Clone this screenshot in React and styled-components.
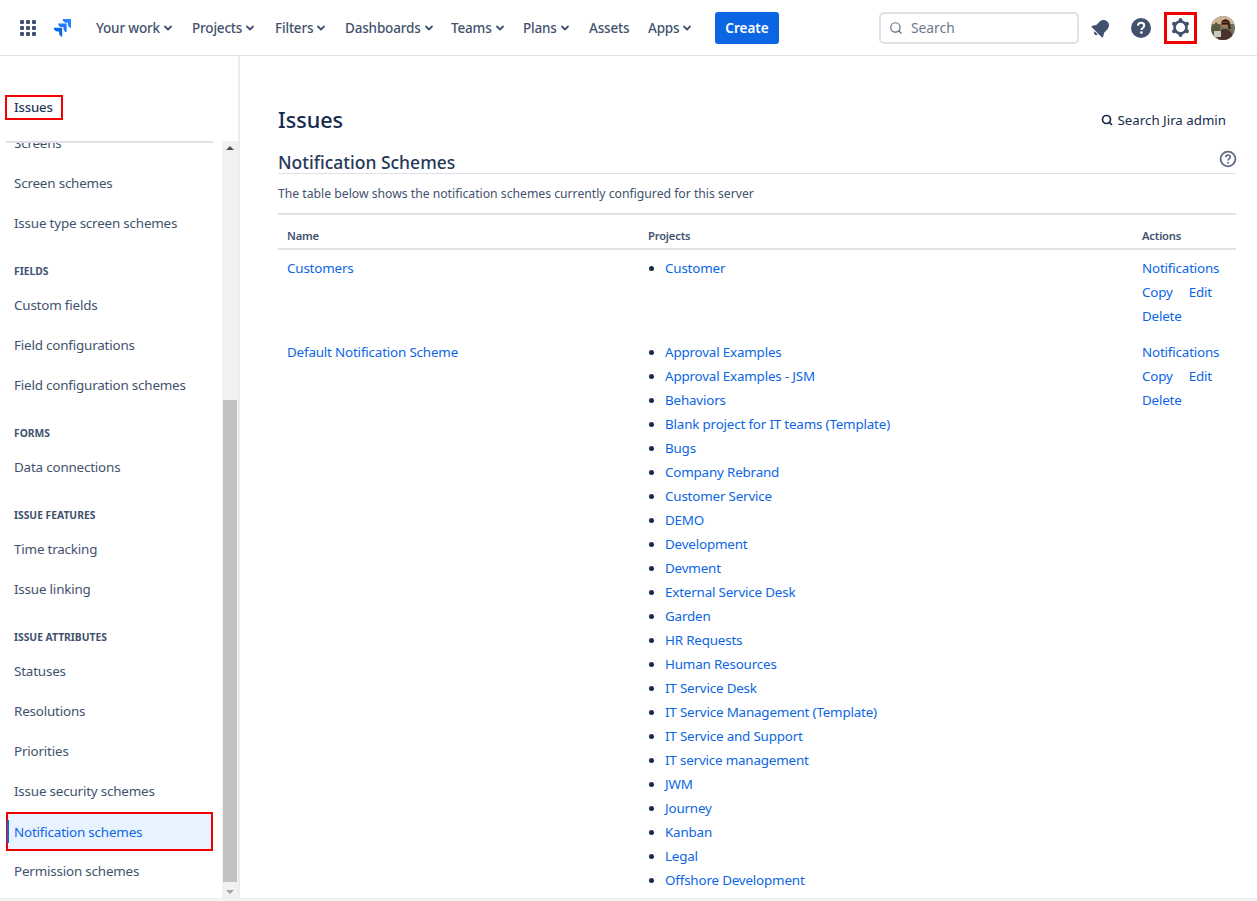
import React from 'react';
import styled, { createGlobalStyle } from 'styled-components';
import { Search, ChevronDown } from 'lucide-react';

const GlobalStyle = createGlobalStyle`
    html, body {
        margin: 0;
        height: 100%;
        overflow: hidden;
        background: #fff;
    }
    body {
        font-family: "Noto Sans", "Open Sans", sans-serif;
        font-size: 13.4px;
        color: #172b4d;
    }
    * { box-sizing: border-box; }
`;

const FONT_FIX = '-0.18px';

// Header
const Page = styled.div`
    height: 901px;
    display: flex;
    flex-direction: column;
    overflow: hidden;
    border-bottom: 3px solid #f1f2f4;
`;

const Header = styled.header`
    height: 56px;
    flex: none;
    display: flex;
    align-items: center;
    padding: 0 22px 0 20px;
    border-bottom: 1px solid #dfe1e6;
`;

const AppGrid = styled.div`
    display: grid;
    grid-template-columns: repeat(3, 4px);
    grid-auto-rows: 4px;
    gap: 2px;
    margin-right: 16px;

    span {
        background: #42526e;
        border-radius: 1px;
    }
`;

const Logo = styled.svg`
    width: 20px;
    height: 20px;
    margin-right: 24px;
`;

const Nav = styled.nav`
    display: flex;
    align-items: center;
`;

const NavItem = styled.div`
    width: ${(p) => p.$width}px;
    display: flex;
    align-items: center;
    font-size: 13.5px;
    font-weight: 500;
    letter-spacing: ${FONT_FIX};
    color: #42526e;
    white-space: nowrap;

    svg {
        width: 12px;
        height: 12px;
        stroke-width: 3.6;
        margin-left: 2px;
    }
`;

const CreateButton = styled.button`
    width: 64px;
    height: 32px;
    margin-left: 21px;
    border: 0;
    border-radius: 3px;
    background: #0c66e4;
    color: #fff;
    font: 600 13.5px "Noto Sans", sans-serif;
`;

const SearchBox = styled.div`
    width: 200px;
    height: 32px;
    margin-left: auto;
    margin-right: 5px;
    padding-left: 8px;
    display: flex;
    align-items: center;
    gap: 8px;
    border: 2px solid #dfe1e6;
    border-radius: 5px;
    color: #6b778c;
    font-size: 13.8px;

    svg {
        width: 14px;
        height: 14px;
        color: #5e6c84;
    }
`;

const HeaderIcon = styled.button`
    width: 33px;
    height: 32px;
    margin-left: ${(p) => p.$gap || 0}px;
    padding: 0;
    display: flex;
    align-items: center;
    justify-content: center;
    background: none;
    border: ${(p) => (p.$marked ? '3px solid #f00000' : '0')};
    color: #42526e;
`;

const Avatar = styled.svg`
    width: 24px;
    height: 24px;
    margin-left: 14px;
    border-radius: 50%;
`;

// Sidebar
const Body = styled.div`
    flex: 1;
    min-height: 0;
    display: flex;
`;

const Sidebar = styled.aside`
    width: 240px;
    flex: none;
    display: flex;
    flex-direction: column;
    border-right: 2px solid #ebecf0;
`;

const SidebarHead = styled.div`
    height: 85px;
    flex: none;
    padding: 39px 0 0 5px;
`;

const SidebarTitle = styled.div`
    width: 58px;
    height: 25px;
    padding-left: 7px;
    line-height: 20px;
    font-size: 13.2px;
    font-weight: 500;
    letter-spacing: ${FONT_FIX};
    color: #253858;
    border: 2px solid #f00000;
`;

const SidebarScroll = styled.div`
    flex: 1;
    min-height: 0;
    display: flex;
`;

const ListWrap = styled.div`
    width: 222px;
    padding-bottom: 7px;
    display: flex;
    flex-direction: column;
    justify-content: flex-end;
    overflow: hidden;
    position: relative;

    &::before {
        content: '';
        position: absolute;
        top: 0;
        left: 6px;
        right: 9px;
        height: 2px;
        background: #dfe1e6;
        z-index: 1;
    }
`;

const SideItem = styled.div`
    flex: none;
    height: ${(p) => (p.$active ? '39px' : '40px')};
    margin-top: ${(p) => (p.$active ? '1px' : '0')};
    margin-left: ${(p) => (p.$active ? '6px' : '0')};
    margin-right: ${(p) => (p.$active ? '9px' : '0')};
    padding-left: ${(p) => (p.$active ? '8px' : '14px')};
    display: flex;
    align-items: center;
    position: relative;
    font-size: 13.4px;
    letter-spacing: ${FONT_FIX};
    color: ${(p) => (p.$active ? '#0c66e4' : '#42526e')};
    background: ${(p) => (p.$active ? '#e9f2ff' : 'transparent')};
    outline: ${(p) => (p.$active ? '2px solid #f00000' : 'none')};
    outline-offset: -2px;

    &::before {
        content: ${(p) => (p.$active ? "''" : 'none')};
        position: absolute;
        left: 1px;
        top: 8px;
        bottom: 8px;
        width: 2px;
        background: #0c66e4;
    }
`;

const SideHeading = styled.div`
    flex: none;
    height: 42px;
    padding: 18px 0 0 14px;
    line-height: 20px;
    font-size: 10.3px;
    font-weight: 700;
    color: #42526e;
`;

const Scrollbar = styled.div`
    width: 16px;
    flex: none;
    background: #f1f1f1;
    position: relative;
`;

const ScrollThumb = styled.div`
    position: absolute;
    top: 259px;
    left: 1px;
    width: 14px;
    height: 482px;
    background: #c1c1c1;
`;

const ScrollArrow = styled.div`
    position: absolute;
    left: 4px;
    ${(p) => (p.$down ? 'bottom: 4px;' : 'top: 5px;')}
    border-left: 4px solid transparent;
    border-right: 4px solid transparent;
    ${(p) => (p.$down ? 'border-top: 4px solid #a3a3a3;' : 'border-bottom: 4px solid #505050;')}
`;

// Main
const Main = styled.main`
    flex: 1;
    min-width: 0;
    padding: 46px 21px 0 38px;
    overflow: hidden;
`;

const TitleRow = styled.div`
    display: flex;
    justify-content: space-between;
    align-items: center;
    height: 34px;
`;

const PageTitle = styled.h1`
    margin: 0;
    font-size: 21.6px;
    font-weight: 500;
    color: #172b4d;
`;

const AdminSearch = styled.div`
    display: flex;
    align-items: center;
    gap: 5px;
    padding-right: 10px;
    margin-top: 2px;
    font-size: 13.3px;
    color: #172b4d;

    svg {
        width: 12px;
        height: 12px;
        stroke-width: 3.4;
    }
`;

const SectionHead = styled.div`
    margin-top: 14px;
    height: 24px;
    display: flex;
    justify-content: space-between;
    align-items: flex-start;
    border-bottom: 1px solid #dfe1e6;
`;

const SectionTitle = styled.h2`
    margin: 0;
    line-height: 24px;
    font-size: 17.5px;
    font-weight: 500;
    color: #253858;
`;

const HelpIcon = styled.svg`
    width: 18px;
    height: 18px;
    margin-right: -1px;
`;

const Description = styled.p`
    margin: 0;
    height: 39px;
    padding-top: 10px;
    line-height: 20px;
    font-size: 12.2px;
    color: #42526e;
`;

const Table = styled.table`
    width: 100%;
    border-collapse: collapse;
    table-layout: fixed;
    border-top: 2px solid #dfe1e6;
    font-size: 13.4px;
    letter-spacing: ${FONT_FIX};
`;

const Th = styled.th`
    width: ${(p) => p.$width || 'auto'};
    height: 35px;
    padding: 7px 9px 0;
    text-align: left;
    font-size: 11.2px;
    font-weight: 600;
    color: #42526e;
    border-bottom: 2px solid #dfe1e6;
`;

const Td = styled.td`
    padding: 6px 9px;
    vertical-align: top;
    line-height: 24px;
`;

const Anchor = styled.a`
    color: #0c66e4;
    text-decoration: none;
`;

const ProjectList = styled.ul`
    margin: 0;
    padding-left: 17px;

    li::marker {
        color: #172b4d;
    }
`;

const ActionLine = styled.div`
    display: flex;
    gap: 16px;
`;

const Actions = () => (
    <>
        <ActionLine><Anchor>Notifications</Anchor></ActionLine>
        <ActionLine><Anchor>Copy</Anchor><Anchor>Edit</Anchor></ActionLine>
        <ActionLine><Anchor>Delete</Anchor></ActionLine>
    </>
);

const navLinks = [
    ['Your work', 96, true],
    ['Projects', 83, true],
    ['Filters', 70, true],
    ['Dashboards', 106, true],
    ['Teams', 72, true],
    ['Plans', 66, true],
    ['Assets', 59, false],
    ['Apps', 46, true],
];

const sideList = [
    'Screens',
    'Screen schemes',
    'Issue type screen schemes',
    '#FIELDS',
    'Custom fields',
    'Field configurations',
    'Field configuration schemes',
    '#FORMS',
    'Data connections',
    '#ISSUE FEATURES',
    'Time tracking',
    'Issue linking',
    '#ISSUE ATTRIBUTES',
    'Statuses',
    'Resolutions',
    'Priorities',
    'Issue security schemes',
    'Notification schemes',
    'Permission schemes',
];

const defaultProjects = [
    'Approval Examples',
    'Approval Examples - JSM',
    'Behaviors',
    'Blank project for IT teams (Template)',
    'Bugs',
    'Company Rebrand',
    'Customer Service',
    'DEMO',
    'Development',
    'Devment',
    'External Service Desk',
    'Garden',
    'HR Requests',
    'Human Resources',
    'IT Service Desk',
    'IT Service Management (Template)',
    'IT Service and Support',
    'IT service management',
    'JWM',
    'Journey',
    'Kanban',
    'Legal',
    'Offshore Development',
];

const App = () => {
    return (
        <Page>
            <GlobalStyle />
            <Header>
                <AppGrid>
                    {Array.from({ length: 9 }).map((_, i) => <span key={i} />)}
                </AppGrid>
                <Logo viewBox="0 0 20 20">
                    <path fill="#2684ff" d="M19 1h-8.4c0 2.1 1.7 3.7 3.7 3.7h1.6v1.5c0 2 1.6 3.7 3.1 3.7z" />
                    <path fill="#1d7afc" d="M14.6 5.4H6.2c0 2.1 1.7 3.7 3.7 3.7h1.6v1.5c0 2 1.6 3.7 3.1 3.7z" />
                    <path fill="#0c66e4" d="M10.2 9.8H1.8c0 2.1 1.7 3.7 3.7 3.7h1.6V15c0 2 1.6 3.7 3.1 3.7z" />
                </Logo>
                <Nav>
                    {navLinks.map(([label, width, arrow]) => (
                        <NavItem key={label} $width={width}>
                            {label}
                            {arrow && <ChevronDown />}
                        </NavItem>
                    ))}
                </Nav>
                <CreateButton>Create</CreateButton>
                <SearchBox>
                    <Search />
                    Search
                </SearchBox>
                <HeaderIcon>
                    <svg width="22" height="22" viewBox="0 0 20 20">
                        <g transform="rotate(45 10 10)" fill="#42526e">
                            <path d="M10 1.8c-3 0-5 2.3-5 5.2v4L3 14.2v1.2h14v-1.2L15 11V7c0-2.9-2-5.2-5-5.2z" />
                            <path d="M8 16.2h4a2 2 0 0 1-4 0z" />
                        </g>
                    </svg>
                </HeaderIcon>
                <HeaderIcon $gap={7}>
                    <svg width="22" height="22" viewBox="0 0 22 22">
                        <circle cx="11" cy="11" r="10" fill="#42526e" />
                        <path d="M7.9 8.7c.2-1.9 1.5-2.9 3.2-2.9 1.8 0 3.1 1.1 3.1 2.7 0 2.5-2.8 2.4-2.8 4.6" fill="none" stroke="#fff" strokeWidth="2" />
                        <circle cx="11.4" cy="15.6" r="1.3" fill="#fff" />
                    </svg>
                </HeaderIcon>
                <HeaderIcon $marked $gap={7}>
                    <svg width="21" height="21" viewBox="0 0 24 24">
                        <circle cx="12" cy="12" r="6.8" fill="none" stroke="#42526e" strokeWidth="3" />
                        <g stroke="#42526e" strokeWidth="4.4" strokeLinecap="round">
                            <path d="M12 3.4v.8M12 19.8v.8" />
                            <path d="M12 3.4v.8M12 19.8v.8" transform="rotate(60 12 12)" />
                            <path d="M12 3.4v.8M12 19.8v.8" transform="rotate(120 12 12)" />
                        </g>
                    </svg>
                </HeaderIcon>
                <Avatar viewBox="0 0 24 24">
                    <rect width="24" height="24" fill="#6f7563" />
                    <rect width="24" height="8" fill="#cbb596" />
                    <path d="M0 13l5-7 4 4v14H0z" fill="#5d5a3c" />
                    <circle cx="14" cy="8" r="3.8" fill="#b07a55" />
                    <path d="M10 7c1-5 8-5 9 0l1 6h-2.5l-1-6.5h-5z" fill="#3e2415" />
                    <rect x="10.5" y="7" width="6.5" height="1.6" fill="#241a16" />
                    <path d="M7 24c0-8 3-11 7-11s8 3 8 11z" fill="#4a3028" />
                    <rect x="3" y="15" width="7" height="6" fill="#c9c9c0" />
                </Avatar>
            </Header>
            <Body>
                <Sidebar>
                    <SidebarHead>
                        <SidebarTitle>Issues</SidebarTitle>
                    </SidebarHead>
                    <SidebarScroll>
                        <ListWrap>
                            {sideList.map((entry) =>
                                entry.startsWith('#') ? (
                                    <SideHeading key={entry}>{entry.slice(1)}</SideHeading>
                                ) : (
                                    <SideItem key={entry} $active={entry === 'Notification schemes'}>
                                        {entry}
                                    </SideItem>
                                )
                            )}
                        </ListWrap>
                        <Scrollbar>
                            <ScrollArrow />
                            <ScrollThumb />
                            <ScrollArrow $down />
                        </Scrollbar>
                    </SidebarScroll>
                </Sidebar>
                <Main>
                    <TitleRow>
                        <PageTitle>Issues</PageTitle>
                        <AdminSearch>
                            <Search />
                            Search Jira admin
                        </AdminSearch>
                    </TitleRow>
                    <SectionHead>
                        <SectionTitle>Notification Schemes</SectionTitle>
                        <HelpIcon viewBox="0 0 18 18">
                            <circle cx="9" cy="9" r="7.4" fill="none" stroke="#5e6c84" strokeWidth="1.8" />
                            <path d="M6.6 7.2C6.8 5.8 7.8 5.1 9 5.1c1.3 0 2.3.8 2.3 2 0 1.8-2.2 1.8-2.2 3.4" fill="none" stroke="#5e6c84" strokeWidth="1.6" />
                            <circle cx="9.1" cy="12.7" r="1" fill="#5e6c84" />
                        </HelpIcon>
                    </SectionHead>
                    <Description>The table below shows the notification schemes currently configured for this server</Description>
                    <Table>
                        <thead>
                            <tr>
                                <Th $width="361px">Name</Th>
                                <Th>Projects</Th>
                                <Th $width="103px">Actions</Th>
                            </tr>
                        </thead>
                        <tbody>
                            <tr>
                                <Td><Anchor>Customers</Anchor></Td>
                                <Td>
                                    <ProjectList>
                                        <li><Anchor>Customer</Anchor></li>
                                    </ProjectList>
                                </Td>
                                <Td><Actions /></Td>
                            </tr>
                            <tr>
                                <Td><Anchor>Default Notification Scheme</Anchor></Td>
                                <Td>
                                    <ProjectList>
                                        {defaultProjects.map((name) => (
                                            <li key={name}><Anchor>{name}</Anchor></li>
                                        ))}
                                    </ProjectList>
                                </Td>
                                <Td><Actions /></Td>
                            </tr>
                        </tbody>
                    </Table>
                </Main>
            </Body>
        </Page>
    );
};

export default App;
